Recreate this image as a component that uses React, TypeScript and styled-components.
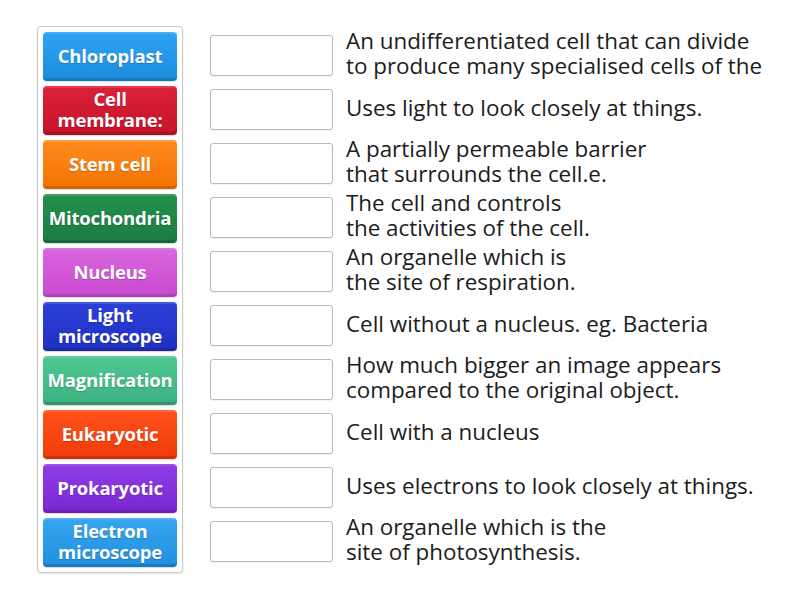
import React from "react";
import styled, { createGlobalStyle } from "styled-components";

const Global = createGlobalStyle`
  html, body { margin: 0; padding: 0; background: #ffffff; }
  body { font-family: "Open Sans", "DejaVu Sans", sans-serif; }
`;

const Page = styled.div`
  display: flex;
  align-items: flex-start;
  padding: 26px 0 0 37px;
  width: 800px;
  height: 600px;
  box-sizing: border-box;
`;

const Panel = styled.div`
  width: 146px;
  box-sizing: border-box;
  border: 1px solid #c9c9c9;
  border-radius: 4px;
  box-shadow: 0 1px 2px rgba(0, 0, 0, 0.12);
  padding: 5px 5px 5px 5px;
  display: flex;
  flex-direction: column;
  gap: 5px;
  background: #fff;
`;

const Tile = styled.div<{ $top: string; $bottom: string }>`
  height: 49px;
  box-sizing: border-box;
  border-radius: 4px;
  background: linear-gradient(${(p) => p.$top}, ${(p) => p.$bottom});
  box-shadow: inset 0 -3px 0 rgba(0, 0, 0, 0.14), inset 0 2px 0 rgba(255, 255, 255, 0.12),
    0 1px 1px rgba(0, 0, 0, 0.15);
  display: flex;
  align-items: center;
  justify-content: center;
  text-align: center;
  color: #fff;
  font-weight: 700;
  font-size: 18.5px;
  line-height: 21px;
  padding: 0 1px 3px;
  text-shadow: 0 1px 1px rgba(0, 0, 0, 0.2);
  letter-spacing: -0.2px;
  white-space: nowrap;
`;

const List = styled.div`
  margin-left: 27px;
  margin-top: 2px;
  display: flex;
  flex-direction: column;
`;

const Row = styled.div`
  height: 54px;
  display: flex;
  align-items: center;
  gap: 13px;
`;

const Box = styled.div`
  width: 123px;
  height: 41px;
  box-sizing: border-box;
  border: 1px solid #b9b9b9;
  border-radius: 3px;
  box-shadow: 0 1px 1px rgba(0, 0, 0, 0.06);
  flex: none;
  background: #fff;
`;

const Text = styled.div`
  font-size: 22.4px;
  line-height: 25px;
  color: #1c1c1c;
  white-space: pre;
  margin-bottom: 4px;
`;

const tiles: { label: React.ReactNode; top: string; bottom: string }[] = [
  { label: "Chloroplast", top: "#2fa4f3", bottom: "#1c8bde" },
  { label: <>Cell<br />membrane:</>, top: "#dc2137", bottom: "#c4142b" },
  { label: "Stem cell", top: "#ff8b1f", bottom: "#f47302" },
  { label: "Mitochondria", top: "#24904d", bottom: "#1b7c41" },
  { label: "Nucleus", top: "#da66de", bottom: "#c94ad0" },
  { label: <>Light<br />microscope</>, top: "#2c40da", bottom: "#1f2fc2" },
  { label: "Magnification", top: "#4fc793", bottom: "#3bb17f" },
  { label: "Eukaryotic", top: "#ff511c", bottom: "#ef3b08" },
  { label: "Prokaryotic", top: "#903de8", bottom: "#7a27d2" },
  { label: <>Electron<br />microscope</>, top: "#37a5ef", bottom: "#1f8fdf" },
];

const texts = [
  "An undifferentiated cell that can divide\nto produce many specialised cells of the",
  "Uses light to look closely at things.",
  "A partially permeable barrier\nthat surrounds the cell.e.",
  "The cell and controls\nthe activities of the cell.",
  "An organelle which is\nthe site of respiration.",
  "Cell without a nucleus. eg. Bacteria",
  "How much bigger an image appears\ncompared to the original object.",
  "Cell with a nucleus",
  "Uses electrons to look closely at things.",
  "An organelle which is the\nsite of photosynthesis.",
];

export default function App() {
  return (
    <>
      <Global />
      <Page>
        <Panel>
          {tiles.map((t, i) => (
            <Tile key={i} $top={t.top} $bottom={t.bottom}>
              <span>{t.label}</span>
            </Tile>
          ))}
        </Panel>
        <List>
          {texts.map((t, i) => (
            <Row key={i}>
              <Box />
              <Text>{t}</Text>
            </Row>
          ))}
        </List>
      </Page>
    </>
  );
}
